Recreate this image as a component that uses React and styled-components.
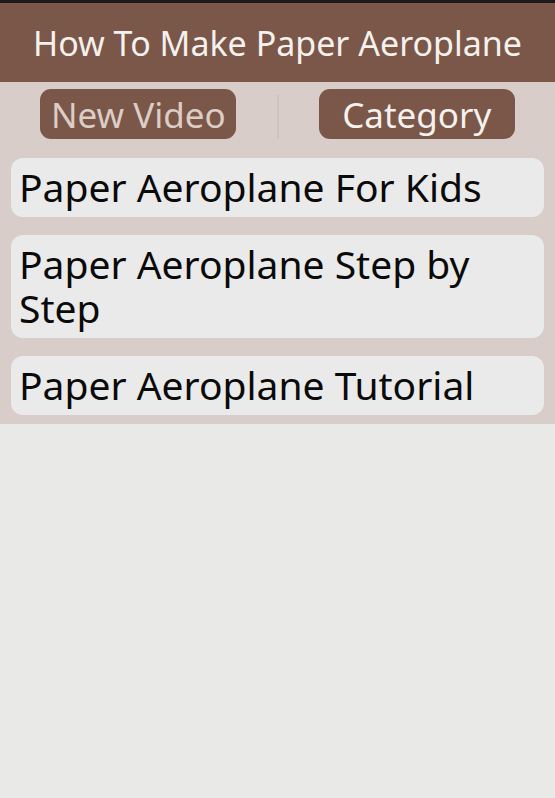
import styled, { createGlobalStyle } from "styled-components";

const GlobalStyle = createGlobalStyle`
  html, body {
    margin: 0;
    padding: 0;
    background: #e9eae8;
    font-family: "Noto Sans", "Open Sans", sans-serif;
  }
`;

const items = [
  "Paper Aeroplane For Kids",
  "Paper Aeroplane Step by Step",
  "Paper Aeroplane Tutorial",
];

const App = () => {
  return (
    <Screen>
      <GlobalStyle />
      <StatusStrip />
      <Header>How To Make Paper Aeroplane</Header>
      <Panel>
        <Tabs>
          <TabSlot>
            <TabButton $active>New Video</TabButton>
          </TabSlot>
          <Divider />
          <TabSlot>
            <TabButton>Category</TabButton>
          </TabSlot>
        </Tabs>
        <List>
          {items.map((item) => (
            <Item key={item}>{item}</Item>
          ))}
        </List>
      </Panel>
    </Screen>
  );
};

export default App;

const Screen = styled.div`
  width: 555px;
  min-height: 798px;
  background: #e9eae8;
`;

const StatusStrip = styled.div`
  height: 3px;
  background: #1d1a19;
`;

const Header = styled.div`
  height: 79px;
  background: #7a5748;
  color: #f4f1ee;
  font-size: 34px;
  display: flex;
  align-items: center;
  justify-content: center;
  padding-top: 1px;
  box-sizing: border-box;
`;

const Panel = styled.div`
  background: #d9cdc9;
  padding: 7px 0 9px;
`;

const Tabs = styled.div`
  display: flex;
  align-items: center;
  height: 50px;
`;

const TabSlot = styled.div`
  flex: 1;
  display: flex;
  justify-content: center;
`;

const TabButton = styled.div`
  width: 196px;
  height: 50px;
  border-radius: 11px;
  background: #7a5748;
  color: ${(p) => (p.$active ? "#dccdc6" : "#f4f1ee")};
  font-size: 35px;
  display: flex;
  align-items: center;
  justify-content: center;
`;

const Divider = styled.div`
  width: 2px;
  height: 44px;
  margin-top: 6px;
  background: #cfc3bf;
`;

const List = styled.div`
  display: flex;
  flex-direction: column;
  gap: 18px;
  margin: 19px 11px 0;
`;

const Item = styled.div`
  background: #eaeaea;
  border-radius: 12px;
  padding: 7px 8px 8px;
  font-size: 39px;
  line-height: 44px;
  color: #0a0a0a;
`;
